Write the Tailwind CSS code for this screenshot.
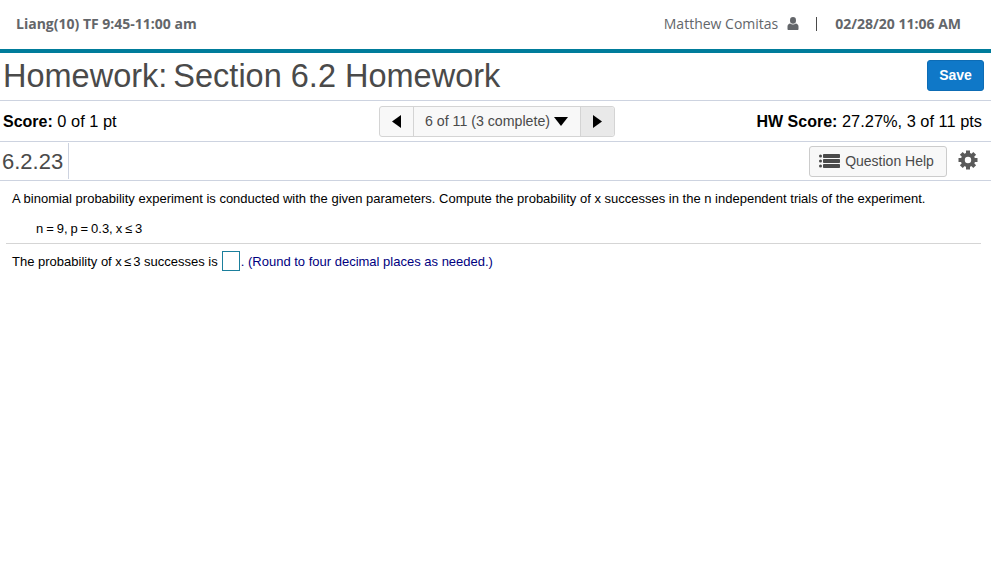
<!DOCTYPE html>
<html><head><meta charset="utf-8">
<script src="https://cdn.jsdelivr.net/npm/@tailwindcss/browser@4"></script>
</head>
<body class="bg-white font-['Liberation_Sans',Arial,sans-serif] overflow-hidden">
<div class="w-[991px] h-[579px] flex flex-col">
  <header class="h-[49px] pb-[2px] flex items-center justify-between pl-[16px] pr-[30px] font-['Open_Sans',sans-serif] text-[14px] text-[#63666a]">
    <div class="font-bold">Liang(10) TF 9:45-11:00 am</div>
    <div class="flex items-center">
      <span>Matthew Comitas</span>
      <svg class="ml-[9px] w-[12px] h-[13px]" viewBox="0 0 12 13" fill="#63666a"><ellipse cx="6" cy="3.4" rx="3" ry="3.3"/><path d="M0.5 12.2V9.6C0.5 7.8 1.8 6.8 3.2 6.6C4 7.3 5 7.6 6 7.6C7 7.6 8 7.3 8.800 6.600C10.200 6.800 11.500 7.800 11.500 9.600V12.200C11.500 12.700 11 13 10.500 13H1.500C1 13 0.500 12.700 0.500 12.200Z"/></svg>
      <span class="ml-[17px] w-px h-[14px] bg-[#4a4a4a]"></span>
      <span class="ml-[18px] font-bold">02/28/20 11:06 AM</span>
    </div>
  </header>
  <div class="h-[4px] bg-[#007c9b]"></div>
  <div class="h-[48px] flex items-center justify-between pl-[3px] pr-[7px] border-b border-[#cdd3e0]">
    <h1 class="text-[32.500px] leading-[44px] mt-[-2px] text-[#4a4a4a] whitespace-nowrap">Homework:<span class="ml-[6px]">Section 6.2 Homework</span></h1>
    <button class="w-[57px] h-[31px] mt-[-3px] rounded-[3px] bg-[#0f78c8] border border-[#0d6cb5] text-white text-[14px] font-bold">Save</button>
  </div>
  <div class="h-[41px] flex items-center justify-between pl-[3px] pr-[9px] border-b border-[#cdd3e0] text-[16.400px] text-black">
    <div class="pt-[1px] w-[300px]"><b class="text-[16px]">Score:</b> 0 of 1 pt</div>
    <div class="flex h-[31px] w-[236px] ml-[76px] border border-[#d4d4d4] rounded-[3px] text-[14.200px] text-[#4a4a4a] bg-[#f8f8f8]">
      <div class="w-[34px] flex items-center justify-center border-r border-[#d4d4d4]">
        <svg class="w-[9px] h-[13px]" viewBox="0 0 9 13"><path d="M9 0V13L0 6.500Z" fill="#000"/></svg>
      </div>
      <div class="w-[166px] pt-[1px] pr-[1px] flex items-center justify-center gap-[4px] whitespace-nowrap">6 of 11 (3 complete)
        <svg class="w-[14px] h-[9px]" viewBox="0 0 14 9"><path d="M0 0H14L7 9Z" fill="#000"/></svg>
      </div>
      <div class="flex-1 flex items-center justify-center border-l border-[#d4d4d4] bg-[#e9e9e9] rounded-r-[3px]">
        <svg class="w-[9px] h-[13px]" viewBox="0 0 9 13"><path d="M0 0V13L9 6.500Z" fill="#000"/></svg>
      </div>
    </div>
    <div class="pt-[1px] ml-auto text-right whitespace-nowrap"><b class="text-[16px]">HW Score:</b> 27.27%, 3 of 11 pts</div>
  </div>
  <div class="h-[39px] flex items-center justify-between pl-[2px] pr-[13px] border-b border-[#cdd3e0]">
    <div class="h-[36px] w-[67px] border-r border-[#cdd3e0] text-[22px] leading-[37px] text-[#4a4a4a]">6.2.23</div>
    <div class="flex items-center">
      <button class="w-[138px] h-[31px] flex items-center justify-center gap-[5px] pr-[3px] rounded-[3px] border border-[#cccccc] bg-[#f8f8f8] text-[14px] text-[#4a4a4a]">
        <svg class="w-[21px] h-[14px]" viewBox="0 0 21 14" fill="#4a4a4a"><circle cx="1.500" cy="2" r="1.500"/><circle cx="1.500" cy="7" r="1.500"/><circle cx="1.500" cy="12" r="1.500"/><rect x="4" y="0" width="17" height="4" rx="0.800"/><rect x="4" y="5" width="17" height="4" rx="0.800"/><rect x="4" y="10" width="17" height="4" rx="0.800"/></svg>
        <span class="pt-[1px]">Question Help</span>
      </button>
      <svg class="ml-[11px] mt-[-2px] w-[20px] h-[20px]" viewBox="0 0 20 20"><circle cx="10" cy="10" r="5.200" fill="none" stroke="#5a5a5a" stroke-width="4"/><g stroke="#5a5a5a" stroke-width="4"><path d="M10 0.500V4"/><path d="M10 16V19.500"/><path d="M0.500 10H4"/><path d="M16 10H19.500"/><path d="M3.300 3.300L5.800 5.800"/><path d="M14.200 14.200L16.700 16.700"/><path d="M3.300 16.700L5.800 14.200"/><path d="M14.200 5.800L16.700 3.300"/></g></svg>
    </div>
  </div>
  <main class="pl-[6px] pr-[10px] text-[13px] text-black">
    <p class="pl-[6px] pt-[10px] leading-[16px] whitespace-nowrap">A binomial probability experiment is conducted with the given parameters. Compute the probability of x successes in the n independent trials of the experiment.</p>
    <p class="pl-[30px] pt-[14px] pb-[6px] leading-[16px] border-b border-[#d5d5d5] [word-spacing:-0.700px]">n = 9, p = 0.3, x ≤ 3</p>
    <div class="flex items-center pl-[6px] pt-[7px]">
      <span class="pt-[1px]">The probability of <span class="[word-spacing:-1.500px]">x ≤ 3</span> successes is</span>
      <span class="ml-[4px] w-[18px] h-[20px] border border-[#1b7f9c]"></span>
      <span class="ml-[1px] pt-[1px] text-[#000080]">. (Round to four decimal places as needed.)</span>
    </div>
  </main>
</div>
</body></html>
